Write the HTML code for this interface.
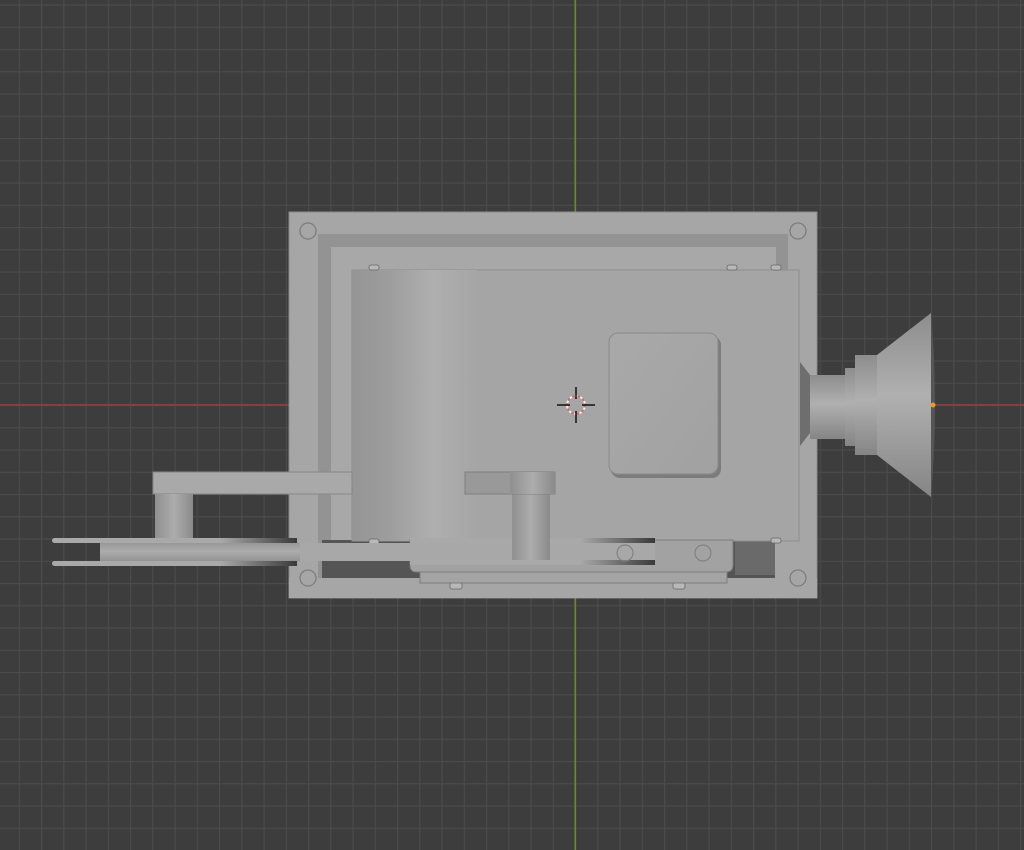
<!DOCTYPE html>
<html><head><meta charset="utf-8"><style>
html,body{margin:0;padding:0;width:1024px;height:850px;overflow:hidden;background:#3d3d3d}
svg{display:block}
</style></head><body>
<svg width="1024" height="850" viewBox="0 0 1024 850" xmlns="http://www.w3.org/2000/svg">
<defs>
<pattern id="g" x="18.75" y="26.75" width="22.25" height="22.25" patternUnits="userSpaceOnUse">
<rect width="22.25" height="22.25" fill="#3d3d3d"/>
<path d="M0 0.5H22.25M0.5 0V22.25" stroke="#4b4b4b" stroke-width="1.3" fill="none"/>
</pattern>
<linearGradient id="cyl" x1="0" x2="1">
<stop offset="0" stop-color="#959595"/><stop offset="0.3" stop-color="#9d9d9d"/><stop offset="0.65" stop-color="#afafaf"/><stop offset="1" stop-color="#a5a5a5"/>
</linearGradient>
<linearGradient id="vc" x1="0" y1="0" x2="0" y2="1">
<stop offset="0" stop-color="#8d8d8d"/><stop offset="0.45" stop-color="#b0b0b0"/><stop offset="1" stop-color="#858585"/>
</linearGradient>
<linearGradient id="hc" x1="0" x2="1">
<stop offset="0" stop-color="#8f8f8f"/><stop offset="0.5" stop-color="#adadad"/><stop offset="1" stop-color="#8a8a8a"/>
</linearGradient>
<linearGradient id="box" x1="0" y1="0" x2="1" y2="1">
<stop offset="0" stop-color="#a9a9a9"/><stop offset="1" stop-color="#a1a1a1"/>
</linearGradient>
<linearGradient id="dk" x1="0" x2="1">
<stop offset="0" stop-color="#a9a9a9"/><stop offset="1" stop-color="#3a3a3a"/>
</linearGradient>
</defs>
<rect width="1024" height="850" fill="url(#g)"/>
<rect x="0" y="404" width="1024" height="1.6" fill="#8a3f48"/>
<rect x="574.5" y="0" width="1.6" height="850" fill="#6b8a2e"/>

<rect x="289" y="212" width="528" height="386" fill="#a6a6a6" stroke="#8c8c8c" stroke-width="1"/>
<rect x="318" y="234" width="470" height="344" fill="#939393"/>
<rect x="331" y="247" width="445" height="318" fill="#a8a8a8"/>
<rect x="322" y="540" width="466" height="38" fill="#555"/>
<rect x="735" y="540" width="40" height="35" fill="#6a6a6a"/>
<rect x="289" y="578" width="528" height="20" fill="#a6a6a6"/>
<rect x="775" y="540" width="13" height="38" fill="#a6a6a6"/>
<g fill="none" stroke="#7d7d7d" stroke-width="1.3">
<circle cx="308" cy="231" r="8"/><circle cx="798" cy="231" r="8"/>
<circle cx="308" cy="578" r="8"/><circle cx="798" cy="578" r="8"/>
</g>
<rect x="352" y="270" width="447" height="271" fill="#a5a5a5" stroke="#8e8e8e" stroke-width="1"/>
<rect x="352" y="270" width="125" height="271" fill="url(#cyl)"/>
<g fill="#b8b8b8" stroke="#666" stroke-width="0.8">
<rect x="369" y="265" width="10" height="5" rx="2"/><rect x="727" y="265" width="10" height="5" rx="2"/><rect x="771" y="265" width="10" height="5" rx="2"/>
<rect x="369" y="539" width="10" height="5" rx="2"/><rect x="771" y="538" width="10" height="5" rx="2"/>
<rect x="450" y="583" width="12" height="6" rx="2"/><rect x="673" y="583" width="12" height="6" rx="2"/>
</g>
<rect x="611" y="336" width="110" height="142" rx="9" fill="#7c7c7c"/>
<rect x="609" y="333" width="109" height="141" rx="9" fill="url(#box)" stroke="#8a8a8a" stroke-width="1"/>
<polygon points="800,362 810,375 810,433 800,446" fill="#6e6e6e"/>
<rect x="810" y="375" width="35" height="64" fill="url(#vc)"/>
<rect x="845" y="368" width="10" height="78" fill="url(#vc)"/>
<rect x="855" y="355" width="22" height="100" fill="url(#vc)"/>
<polygon points="877,355 931,313 931,497 877,455" fill="url(#vc)"/>
<path d="M931 313 Q939 405 931 497" fill="#555"/>
<circle cx="933" cy="405" r="2.5" fill="#e69a2a"/>
<path d="M410 540 H733 V565 Q733 572 726 572 H416 Q410 572 410 565 Z" fill="#a2a2a2" stroke="#7a7a7a"/>
<rect x="420" y="572" width="307" height="11" fill="#a4a4a4" stroke="#7d7d7d"/>
<rect x="153" y="472" width="199" height="22" fill="#a9a9a9" stroke="#888"/>
<rect x="155" y="494" width="38" height="46" fill="url(#hc)"/>
<rect x="100" y="543" width="555" height="18" fill="#a8a8a8"/>
<rect x="100" y="543" width="200" height="18" fill="url(#vc)" opacity="0.6"/>
<rect x="52" y="538" width="245" height="5" rx="2.5" fill="#a9a9a9"/>
<rect x="52" y="561" width="245" height="5" rx="2.5" fill="#a9a9a9"/>
<rect x="220" y="538" width="77" height="5" fill="url(#dk)"/>
<rect x="220" y="561" width="77" height="5" fill="url(#dk)"/>
<rect x="410" y="538" width="245" height="5" fill="#a9a9a9"/>
<rect x="410" y="560" width="245" height="5" fill="#a9a9a9"/>
<rect x="580" y="538" width="75" height="5" fill="url(#dk)"/>
<rect x="580" y="560" width="75" height="5" fill="url(#dk)"/>
<g fill="none" stroke="#828282" stroke-width="1.2">
<circle cx="625" cy="553" r="8"/><circle cx="703" cy="553" r="8"/>
</g>
<rect x="512" y="494" width="38" height="66" fill="url(#hc)"/>
<rect x="465" y="472" width="90" height="22" fill="#999" stroke="#808080"/>
<rect x="510" y="472" width="45" height="22" fill="url(#hc)"/>
<circle cx="576" cy="405" r="9" fill="none" stroke="#d86a6a" stroke-width="2" stroke-dasharray="3 2.5"/>
<circle cx="576" cy="405" r="9" fill="none" stroke="#eee" stroke-width="2" stroke-dasharray="2.5 3" stroke-dashoffset="3"/>
<g stroke="#111" stroke-width="1.5">
<path d="M557 405H570M582 405H595M576 387V399M576 411V423"/>
</g>
</svg>
</body></html>
